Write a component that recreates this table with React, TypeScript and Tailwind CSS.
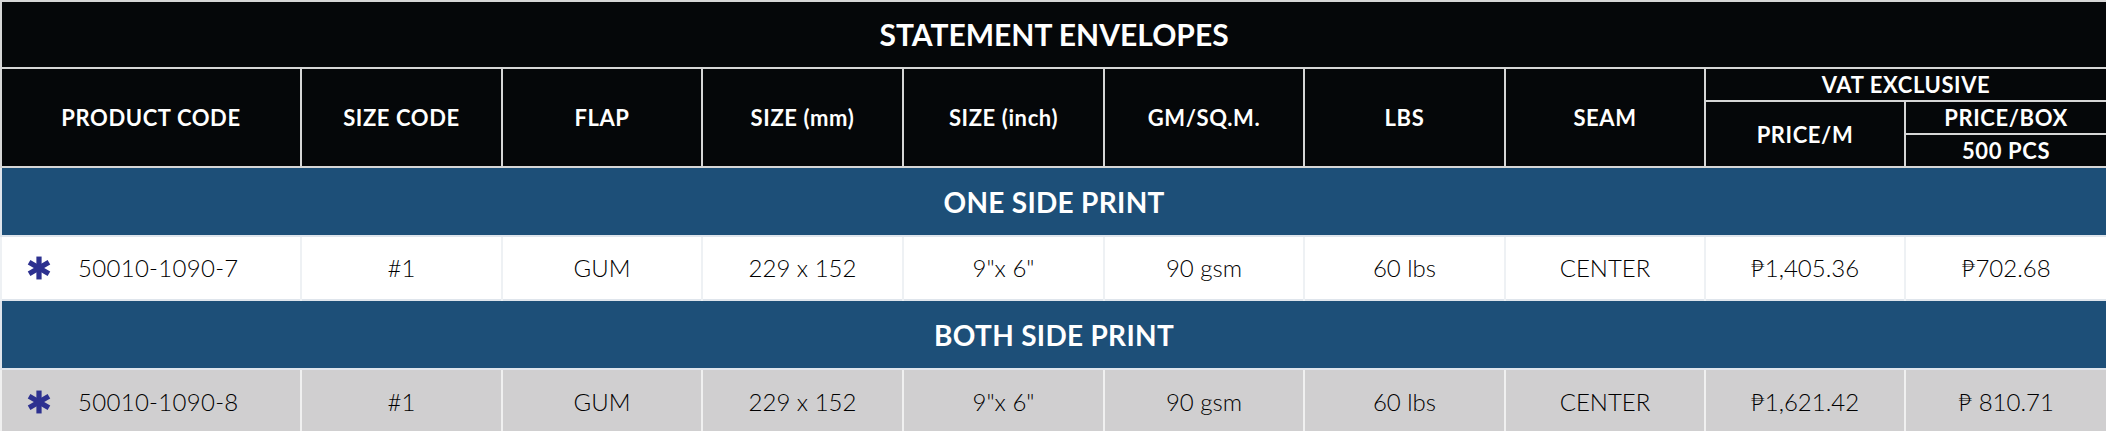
const head = "font-['Lato','Noto_Sans',sans-serif] font-bold text-white";
const body = "font-['Lato','Noto_Sans','DejaVu_Sans',sans-serif] font-light text-[24px] text-black";

function Star() {
  return (
    <svg width="24" height="24" viewBox="0 0 22 22" className="shrink-0">
      <g stroke="#2d3190" strokeWidth="4.8" strokeLinecap="butt">
        <line x1="11" y1="0.5" x2="11" y2="21.5" />
        <line x1="1.9" y1="5.75" x2="20.1" y2="16.25" />
        <line x1="1.9" y1="16.25" x2="20.1" y2="5.75" />
      </g>
    </svg>
  );
}

const cols = [300, 201, 200, 201, 201, 200, 201, 200, 200, 202];

type Row = { code: string; cells: string[] };

function DataRow({ row, grey }: { row: Row; grey?: boolean }) {
  const bg = grey ? "bg-[#d0cfd0]" : "bg-white";
  const line = grey ? "border-[#f0f0f0]" : "border-[#eef1f4]";
  return (
    <tr className={`${grey ? "h-[65px]" : "h-[64px]"} ${bg}`}>
      <td className={`border-x-2 ${line} ${body}`}>
        <div className="flex items-center pl-[25px]">
          <Star />
          <span className="ml-[27px] tracking-[0.3px]">{row.code}</span>
        </div>
      </td>
      {row.cells.map((c, i) => (
        <td key={i} className={`border-x-2 ${line} text-center ${body}`}>
          {c}
        </td>
      ))}
    </tr>
  );
}

function Section({ title }: { title: string }) {
  return (
    <tr className="h-[69px] bg-[#1d4f78]">
      <td colSpan={10} className={`border-2 border-[#dfe5ec] text-center text-[28px] tracking-[0.3px] ${head}`}>
        {title}
      </td>
    </tr>
  );
}

export default function App() {
  const th = `border-2 border-[#d6d6d6] text-center text-[22px] tracking-[0.6px] ${head}`;
  return (
    <div className="w-[2106px] h-[431px] overflow-hidden bg-white">
      <table className="w-[2106px] table-fixed border-collapse">
        <colgroup>
          {cols.map((w, i) => (
            <col key={i} style={{ width: w }} />
          ))}
        </colgroup>
        <tbody>
          <tr className="h-[67px] bg-[#050709]">
            <td colSpan={10} className={`border-2 border-[#d6d6d6] text-center text-[30px] ${head}`}>
              STATEMENT ENVELOPES
            </td>
          </tr>
          <tr className="h-[33px] bg-[#050709]">
            <td rowSpan={3} className={th}>PRODUCT CODE</td>
            <td rowSpan={3} className={th}>SIZE CODE</td>
            <td rowSpan={3} className={th}>FLAP</td>
            <td rowSpan={3} className={th}>SIZE (mm)</td>
            <td rowSpan={3} className={th}>SIZE (inch)</td>
            <td rowSpan={3} className={th}>GM/SQ.M.</td>
            <td rowSpan={3} className={th}>LBS</td>
            <td rowSpan={3} className={th}>SEAM</td>
            <td colSpan={2} className={`${th} leading-none`}>VAT EXCLUSIVE</td>
          </tr>
          <tr className="h-[33px] bg-[#050709]">
            <td rowSpan={2} className={th}>PRICE/M</td>
            <td className={`${th} leading-none`}>PRICE/BOX</td>
          </tr>
          <tr className="h-[33px] bg-[#050709]">
            <td className={`${th} leading-none`}>500 PCS</td>
          </tr>
          <Section title="ONE SIDE PRINT" />
          <DataRow
            row={{
              code: "50010-1090-7",
              cells: ["#1", "GUM", "229 x 152", "9\"x 6\"", "90 gsm", "60 lbs", "CENTER", "₱1,405.36", "₱702.68"],
            }}
          />
          <Section title="BOTH SIDE PRINT" />
          <DataRow
            grey
            row={{
              code: "50010-1090-8",
              cells: ["#1", "GUM", "229 x 152", "9\"x 6\"", "90 gsm", "60 lbs", "CENTER", "₱1,621.42", "₱ 810.71"],
            }}
          />
        </tbody>
      </table>
    </div>
  );
}
